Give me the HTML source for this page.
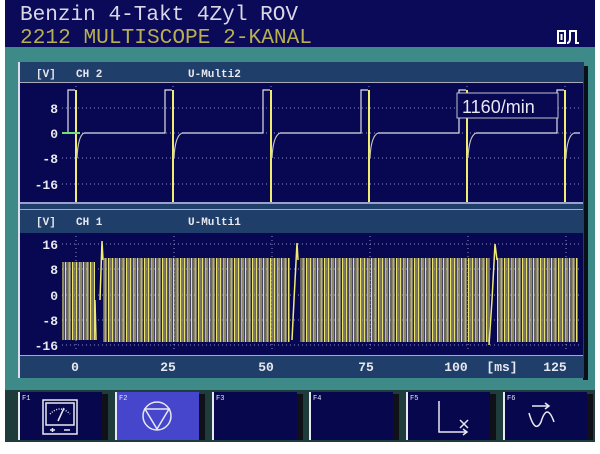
<!DOCTYPE html>
<html><head><meta charset="utf-8"><style>
body{margin:0;width:600px;height:449px;overflow:hidden;background:#fff;font-family:"Liberation Mono",monospace}
</style></head><body>
<svg width="600" height="449" viewBox="0 0 600 449" xmlns="http://www.w3.org/2000/svg">
<defs>
<pattern id="st" width="3.6" height="10" patternUnits="userSpaceOnUse"><rect x="0" y="0" width="1.4" height="10" fill="#ece670"/><rect x="1.9" y="0" width="0.9" height="10" fill="#a8a27a"/></pattern>
</defs>
<rect x="5" y="0" width="590" height="48" fill="#0a0a58"/>
<text x="20" y="20" font-family="Liberation Mono,monospace" font-size="21" fill="#d8d8e8" textLength="278" lengthAdjust="spacingAndGlyphs">Benzin 4-Takt 4Zyl ROV</text>
<text x="20" y="43" font-family="Liberation Mono,monospace" font-size="21" fill="#b8b050" textLength="292" lengthAdjust="spacingAndGlyphs">2212 MULTISCOPE 2-KANAL</text>
<g stroke="#fff" stroke-width="2" fill="none"><path d="M558 31 V43 H565 V31 Z M561.5 34 V40"/><path d="M567 43 Q570 43 570 38 V31 H576 V43 H579"/></g>
<rect x="5" y="47" width="590" height="343" fill="#3e8a88"/>
<rect x="5" y="390" width="590" height="52" fill="#1e3c3c"/>
<!-- panel -->
<rect x="583" y="66" width="5" height="314" fill="#081018"/>
<rect x="18" y="62" width="566" height="316" fill="#1f3f6a"/>
<rect x="18" y="62" width="2" height="316" fill="#dde"/>
<rect x="20" y="83" width="563" height="119" fill="#070752"/>
<rect x="20" y="202" width="563" height="2" fill="#9aa0d0"/>
<rect x="20" y="82" width="563" height="1" fill="#aab"/>
<rect x="20" y="209" width="563" height="1" fill="#aab"/>
<rect x="20" y="233" width="563" height="122" fill="#070752"/>
<rect x="20" y="355" width="563" height="1" fill="#aab"/>
<g font-family="Liberation Mono,monospace" font-size="11" font-weight="bold" fill="#e8e8f0">
<text x="36" y="77">[V]</text><text x="76" y="77">CH 2</text><text x="188" y="77">U-Multi2</text>
<text x="36" y="225">[V]</text><text x="76" y="225">CH 1</text><text x="188" y="225">U-Multi1</text>
<g font-size="13" text-anchor="end"><text x="58" y="113">8</text><text x="58" y="138">0</text><text x="58" y="163">-8</text><text x="58" y="189">-16</text>
<text x="58" y="249">16</text><text x="58" y="274">8</text><text x="58" y="300">0</text><text x="58" y="325">-8</text><text x="58" y="350">-16</text></g>
<g font-size="13" text-anchor="middle"><text x="75" y="371">0</text><text x="168" y="371">25</text><text x="266" y="371">50</text><text x="366" y="371">75</text><text x="456" y="371">100</text><text x="502" y="371">[ms]</text><text x="555" y="371">125</text></g>
</g>
<!-- grid -->
<g stroke="#8890c8" stroke-width="1" stroke-dasharray="1,3">
<line x1="62" y1="108" x2="580" y2="108"/><line x1="62" y1="133" x2="580" y2="133"/><line x1="62" y1="158" x2="580" y2="158"/><line x1="62" y1="184" x2="580" y2="184"/>
<line x1="62" y1="244" x2="580" y2="244"/><line x1="62" y1="269" x2="580" y2="269"/><line x1="62" y1="295" x2="580" y2="295"/><line x1="62" y1="320" x2="580" y2="320"/><line x1="62" y1="345" x2="580" y2="345"/>
<line x1="76" y1="86" x2="76" y2="200"/><line x1="173" y1="86" x2="173" y2="200"/><line x1="271" y1="86" x2="271" y2="200"/><line x1="369" y1="86" x2="369" y2="200"/><line x1="467" y1="86" x2="467" y2="200"/><line x1="565" y1="86" x2="565" y2="200"/>
<line x1="76" y1="236" x2="76" y2="352"/><line x1="174" y1="236" x2="174" y2="352"/><line x1="272" y1="236" x2="272" y2="352"/><line x1="370" y1="236" x2="370" y2="352"/><line x1="468" y1="236" x2="468" y2="352"/><line x1="566" y1="236" x2="566" y2="352"/>
</g>
<!-- CH2 trace -->
<g fill="none" stroke-width="1.2">
<path stroke="#e0e0e8" d="M62 133 H68 V90 H75 M84 133 H165 V90 H172 M182 133 H263 V90 H270 M280 133 H361 V90 H368 M378 133 H459 V90 H466 M476 133 H557 V90 H564 M574 133 H580"/>
<g stroke="#f0ec70" stroke-width="2"><path d="M76 90 V202 M173 90 V202 M271 90 V202 M369 90 V202 M467 90 V202 M565 90 V202"/></g>
<path stroke="#c8c8b8" d="M77 158 Q78 136 84 133 M174 158 Q175 136 182 133 M272 158 Q273 136 280 133 M370 158 Q371 136 378 133 M468 158 Q469 136 476 133 M566 158 Q567 136 574 133"/>
<path stroke="#70e070" stroke-width="2" d="M62 133 H80"/>
</g>
<rect x="457" y="93" width="101" height="25" fill="#070752" stroke="#c0c0d0" stroke-width="1"/>
<text x="462" y="113" font-family="Liberation Sans,sans-serif" font-size="18" fill="#e8e8f0">1160/min</text>
<!-- CH1 trace -->
<g fill="url(#st)">
<rect x="62" y="262" width="33" height="78"/>
<rect x="103" y="258" width="187" height="84"/>
<rect x="300" y="258" width="190" height="84"/>
<rect x="497" y="258" width="81" height="84"/>
</g>
<g stroke="#f0ec70" stroke-width="1.5" fill="none">
<path d="M95 300 L96 340 M100 300 L102 241 L103 260 M292 340 L294 300 L297 243 L298 260 M489 345 L492 300 L495 244 L497 260"/>
</g>
<!-- function keys -->
<g>
<rect x="18" y="392" width="84" height="48" fill="#07074e"/>
<rect x="115" y="392" width="84" height="48" fill="#4646cc"/>
<rect x="212" y="392" width="85" height="48" fill="#07074e"/>
<rect x="309" y="392" width="84" height="48" fill="#07074e"/>
<rect x="406" y="392" width="84" height="48" fill="#07074e"/>
<rect x="503" y="392" width="84" height="48" fill="#07074e"/>
<g fill="#e8e8f0"><rect x="18" y="392" width="2" height="48"/><rect x="115" y="392" width="2" height="48"/><rect x="212" y="392" width="2" height="48"/><rect x="309" y="392" width="2" height="48"/><rect x="406" y="392" width="2" height="48"/><rect x="503" y="392" width="2" height="48"/></g>
<g fill="#101018"><rect x="102" y="394" width="6" height="46"/><rect x="199" y="394" width="6" height="46"/><rect x="297" y="394" width="6" height="46"/><rect x="393" y="394" width="6" height="46"/><rect x="490" y="394" width="6" height="46"/><rect x="587" y="394" width="6" height="46"/></g>
<g font-family="Liberation Mono,monospace" font-size="7" fill="#e8e8f0"><text x="22" y="400">F1</text><text x="119" y="400">F2</text><text x="216" y="400">F3</text><text x="313" y="400">F4</text><text x="410" y="400">F5</text><text x="507" y="400">F6</text></g>
<g stroke="#e8e8f0" fill="none" stroke-width="1.5">
<rect x="43" y="400" width="34" height="34"/><rect x="46" y="403" width="28" height="22"/>
<path d="M50 414 Q60 404 70 414" stroke-dasharray="1,1.5"/><path d="M58 421 L64 408"/>
<path d="M50 430 H55 M52.5 428 V432 M64 430 H70"/>
<circle cx="157" cy="416" r="14"/><path d="M145 409 H169 L157 429 Z"/>
<path d="M439 401 V432 H467 M463 429 L467 432 L463 435"/><path d="M460 420 L468 428 M468 420 L460 428"/>
<path d="M529 413 Q535 434 541 422 Q547 402 554 422"/><path d="M532 406 H548 M545 403 L549 406 L545 409"/>
</g>
</g>
</svg>
</body></html>
